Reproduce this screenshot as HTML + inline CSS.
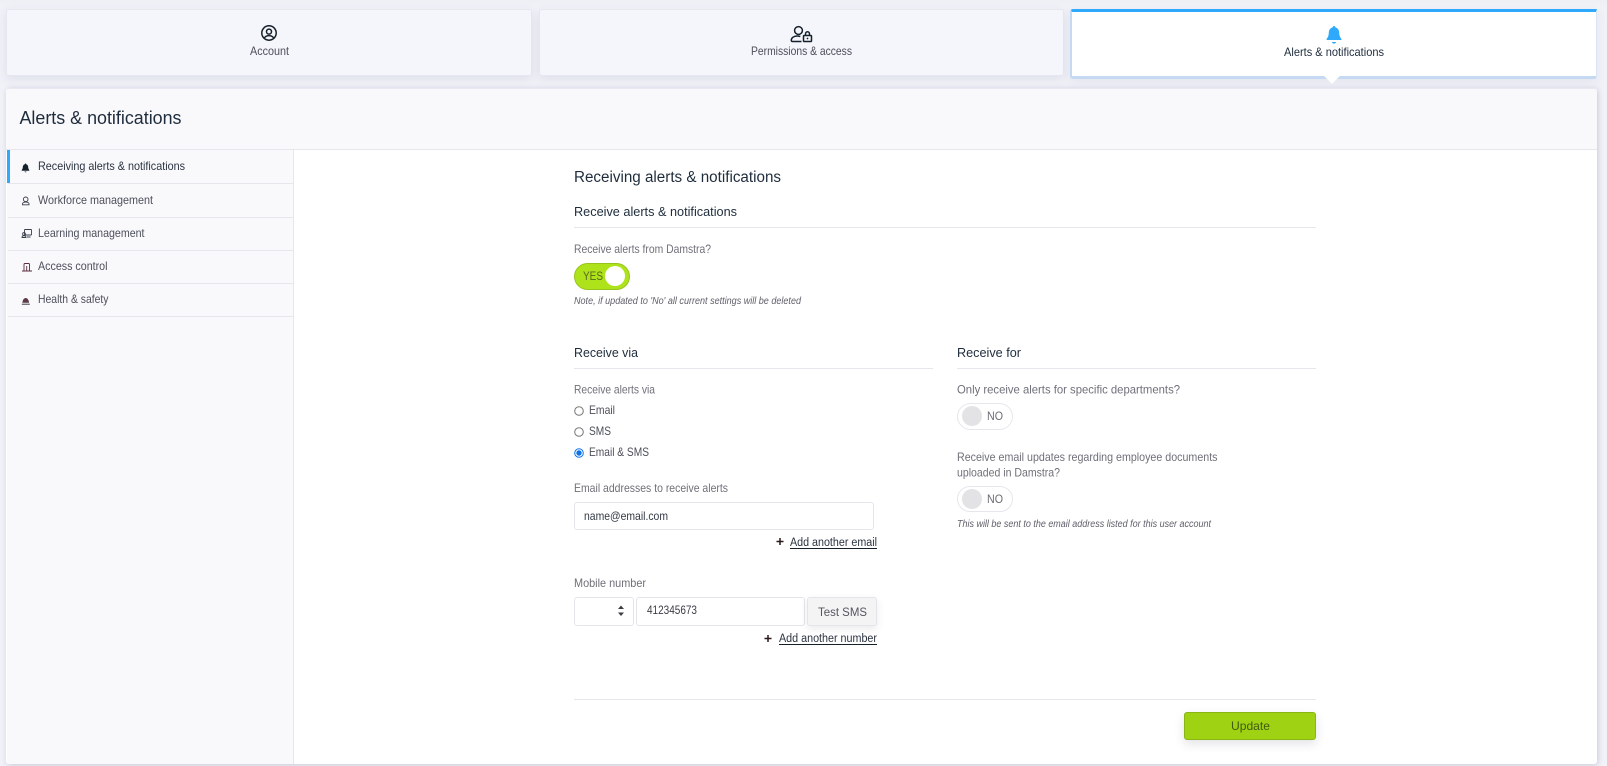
<!DOCTYPE html>
<html><head><meta charset="utf-8"><title>Alerts &amp; notifications</title>
<style>
html,body{margin:0;padding:0;width:1607px;height:766px;overflow:hidden;background:#f1f2f8;font-family:"Liberation Sans",sans-serif}
.b{position:absolute;box-sizing:border-box}
.tab{background:#f4f6fb;border:1px solid #e6e7ef;border-radius:3px;box-shadow:0 3px 10px rgba(60,60,110,.10);top:9px;height:67px}
svg.t{position:absolute;left:0;top:0;width:1607px;height:766px}
svg.t text{font-family:"Liberation Sans",sans-serif;font-size:12px;fill:#6f7079}
svg.t .d{fill:#1f2c3c}
svg.t .m{fill:#4d4f5a}
</style></head><body>
<div class="b" style="left:0;top:0;width:1607px;height:8px;background:linear-gradient(#eeeff5,#f1f2f8)"></div>
<div class="b tab" style="left:6px;width:526px"></div>
<div class="b tab" style="left:539px;width:525px"></div>
<div class="b" style="left:1070px;top:9px;width:527px;height:70px;background:#fff;border-top:3px solid #2fa9fb;border-left:2px solid #c5d9f3;border-bottom:3px solid #c5d9f3;border-right:1px solid #d9e4f5;border-radius:3px 0 3px 3px;box-shadow:0 3px 10px rgba(60,60,110,.08)"></div>
<div class="b" style="left:1325px;top:67px;width:14px;height:14px;background:#fff;transform:rotate(45deg)"></div>

<div class="b" style="left:6px;top:88px;width:1591px;height:676px;background:#fff;border-radius:3px;box-shadow:1px 1px 6px rgba(60,60,110,.22)"></div>
<div class="b" style="left:6px;top:88px;width:1591px;height:62px;background:#f9f9fc;border-bottom:1px solid #e6e7ec;border-top:1px solid #e9eaf1;border-radius:3px 3px 0 0"></div>
<div class="b" style="left:7px;top:150px;width:287px;height:614px;background:#f9f9fc;border-right:1px solid #e6e7ec"></div>
<div class="b" style="left:7px;top:150px;width:3px;height:33px;background:#2fa9fb"></div>
<div class="b" style="left:8px;top:183px;width:285px;height:1px;background:#e6e7ec"></div>
<div class="b" style="left:8px;top:217px;width:285px;height:1px;background:#e6e7ec"></div>
<div class="b" style="left:8px;top:250px;width:285px;height:1px;background:#e6e7ec"></div>
<div class="b" style="left:8px;top:283px;width:285px;height:1px;background:#e6e7ec"></div>
<div class="b" style="left:8px;top:316px;width:285px;height:1px;background:#e6e7ec"></div>

<div class="b" style="left:574px;top:227px;width:742px;height:1px;background:#e6e7ec"></div>
<div class="b" style="left:574px;top:368px;width:359px;height:1px;background:#e6e7ec"></div>
<div class="b" style="left:957px;top:368px;width:359px;height:1px;background:#e6e7ec"></div>
<div class="b" style="left:574px;top:699px;width:742px;height:1px;background:#e6e7ec"></div>

<div class="b" style="left:574px;top:263px;width:56px;height:27px;border-radius:14px;background:#aee31c;border:1px solid #97c41c"></div>
<div class="b" style="left:605px;top:266px;width:20px;height:20px;border-radius:50%;background:#fff"></div>
<div class="b" style="left:957px;top:403px;width:56px;height:27px;border-radius:14px;background:#fff;border:1px solid #e6e7ec"></div>
<div class="b" style="left:962px;top:406px;width:20px;height:20px;border-radius:50%;background:#e3e3e5"></div>
<div class="b" style="left:957px;top:486px;width:56px;height:26px;border-radius:13px;background:#fff;border:1px solid #e6e7ec"></div>
<div class="b" style="left:962px;top:489px;width:20px;height:20px;border-radius:50%;background:#e3e3e5"></div>

<div class="b" style="left:574px;top:502px;width:300px;height:28px;border:1px solid #e4e5ea;border-radius:3px;background:#fff"></div>
<div class="b" style="left:574px;top:597px;width:60px;height:29px;border:1px solid #e4e5ea;border-radius:3px;background:#fff"></div>
<div class="b" style="left:636px;top:597px;width:169px;height:29px;border:1px solid #e4e5ea;border-radius:3px;background:#fff"></div>
<div class="b" style="left:807px;top:597px;width:70px;height:29px;border:1px solid #e4e5ea;border-radius:3px;background:#f4f4f5;box-shadow:0 3px 8px rgba(60,60,80,.10)"></div>
<div class="b" style="left:1184px;top:712px;width:132px;height:28px;border:1px solid #8ab512;border-radius:3px;background:#a0d214;box-shadow:0 4px 10px rgba(60,60,80,.14)"></div>

<svg class="t" viewBox="0 0 1607 766" xmlns="http://www.w3.org/2000/svg">
<!-- tab icons -->
<g fill="none" stroke="#15202b" stroke-width="1.5">
<circle cx="269" cy="33" r="7.2"/><circle cx="269" cy="31.6" r="2.5"/><path d="M264.2 38.4c.8-2 2.6-2.8 4.8-2.8s4 .8 4.8 2.8"/>
<circle cx="798.5" cy="30.500" r="3.900"/><path d="M801.500 41.500h-9c-.8 0-1.200-.5-1.200-1.100 0-2.700 2.500-4.400 6-4.400 1.200 0 2 .2 3 .5"/>
<rect x="803.500" y="35.500" width="8" height="6" rx=".8"/><path d="M805.500 35.500v-1.500c0-1.400.9-2.200 2-2.200s2 .8 2 2.200v1.500"/>
</g>
<circle cx="807.500" cy="38.500" r=".9" fill="#15202b"/>
<path d="M1334 26c.8 0 1.300.6 1.400 1.400 2.500.7 3.700 2.800 3.800 5.200.1 2.800.7 4.700 2.200 6.300v1.100h-14.800v-1.100c1.500-1.600 2.100-3.500 2.200-6.300.1-2.400 1.300-4.500 3.800-5.200.1-.8.600-1.400 1.400-1.400zM1331.800 42h4.400c-.2 1-1.100 1.600-2.200 1.600s-2-.6-2.200-1.600z" fill="#2fa9fb"/>
<!-- sidebar icons -->
<path d="M25.500 163.500c.4 0 .7.300.7.700 1.300.4 1.900 1.500 2 2.700 0 1.400.4 2.400 1.100 3.200v.7h-7.600v-.7c.7-.8 1.100-1.800 1.100-3.200.1-1.200.7-2.300 2-2.700 0-.4.300-.7.700-.7zM24.500 171.500h2c-.1.500-.5.800-1 .8s-.9-.3-1-.8z" fill="#15202b"/>
<g fill="none" stroke="#3a3f4a" stroke-width=".9">
<circle cx="25.700" cy="199.300" r="2.300"/><path d="M22.500 204.800h6.500v-1c0-1-1.500-1.800-3.200-1.800s-3.300.8-3.300 1.800z"/>
<rect x="24.500" y="229.500" width="7" height="5.500" rx=".5"/><circle cx="24" cy="234" r="1.400"/><path d="M22 237.500c0-1.400 1-1.800 2-1.800s2 .4 2 1.800zM27 237h3.500"/>
</g>
<g fill="none" stroke="#5a2e3a" stroke-width=".9"><path d="M22 271h10M24 271v-6.500q0-1 1-1h3.500q1 0 1 1v6.500M26.700 271v-5"/></g>
<path d="M22.300 302.700c.4-2.800 1.700-4.700 3.400-4.700s3 1.900 3.400 4.700z" fill="#5a3a44"/><path d="M21.800 304.200h8" stroke="#3a3f4a" stroke-width="1"/>
<!-- tab text -->
<text lengthAdjust="spacingAndGlyphs" x="250" y="55" textLength="39" class="m">Account</text>
<text lengthAdjust="spacingAndGlyphs" x="751" y="55" textLength="101" class="m">Permissions &amp; access</text>
<text lengthAdjust="spacingAndGlyphs" x="1284" y="56" textLength="100" class="d">Alerts &amp; notifications</text>
<text lengthAdjust="spacingAndGlyphs" x="19.500" y="124" textLength="162" class="d" style="font-size:18px">Alerts &amp; notifications</text>
<!-- sidebar text -->
<text lengthAdjust="spacingAndGlyphs" x="38" y="170" textLength="147" class="d" style="fill:#2b3340">Receiving alerts &amp; notifications</text>
<text lengthAdjust="spacingAndGlyphs" x="38" y="204" textLength="115" class="m">Workforce management</text>
<text lengthAdjust="spacingAndGlyphs" x="38" y="237" textLength="106.500" class="m">Learning management</text>
<text lengthAdjust="spacingAndGlyphs" x="38" y="270" textLength="69.500" class="m">Access control</text>
<text lengthAdjust="spacingAndGlyphs" x="38" y="303" textLength="70.500" class="m">Health &amp; safety</text>
<!-- main -->
<text lengthAdjust="spacingAndGlyphs" x="574" y="182" textLength="207" class="d" style="font-size:15.500px">Receiving alerts &amp; notifications</text>
<text lengthAdjust="spacingAndGlyphs" x="574" y="216" textLength="163" class="d" style="font-size:13px">Receive alerts &amp; notifications</text>
<text lengthAdjust="spacingAndGlyphs" x="574" y="253" textLength="137">Receive alerts from Damstra?</text>
<text lengthAdjust="spacingAndGlyphs" x="583" y="280" textLength="20" style="fill:#57681a;font-size:11.500px">YES</text>
<text lengthAdjust="spacingAndGlyphs" x="574" y="304" textLength="227" style="font-size:10px;font-style:italic;fill:#5f606a">Note, if updated to 'No' all current settings will be deleted</text>
<text lengthAdjust="spacingAndGlyphs" x="574" y="357" textLength="64" class="d" style="font-size:13px">Receive via</text>
<text lengthAdjust="spacingAndGlyphs" x="957" y="357" textLength="64" class="d" style="font-size:13px">Receive for</text>
<text lengthAdjust="spacingAndGlyphs" x="574" y="393.500" textLength="81">Receive alerts via</text>
<circle cx="579" cy="411" r="4.300" fill="#fff" stroke="#767676" stroke-width="1"/>
<circle cx="579" cy="432" r="4.300" fill="#fff" stroke="#767676" stroke-width="1"/>
<circle cx="579" cy="453" r="4.300" fill="#fff" stroke="#0f73e6" stroke-width="1"/><circle cx="579" cy="453" r="2.700" fill="#0f73e6"/>
<text lengthAdjust="spacingAndGlyphs" x="589" y="414" textLength="26" class="m">Email</text>
<text lengthAdjust="spacingAndGlyphs" x="589" y="435" textLength="22" class="m">SMS</text>
<text lengthAdjust="spacingAndGlyphs" x="589" y="456" textLength="60" class="m">Email &amp; SMS</text>
<text lengthAdjust="spacingAndGlyphs" x="574" y="492" textLength="154">Email addresses to receive alerts</text>
<text lengthAdjust="spacingAndGlyphs" x="584" y="520" textLength="84" class="d" style="fill:#333a44">name@email.com</text>
<path d="M780 538v7M776.500 541.500h7M768 635v7M764.500 638.500h7" stroke="#2a1a1a" stroke-width="1.500"/>
<text lengthAdjust="spacingAndGlyphs" x="790" y="546" textLength="87" class="d" style="fill:#2b3340;font-size:11.500px">Add another email</text>
<path d="M790 548.500h87M779 644.500h98" stroke="#15202b" stroke-width="1"/>
<text lengthAdjust="spacingAndGlyphs" x="574" y="587" textLength="72">Mobile number</text>
<path d="M618 609l3 -3.500 3 3.500zM618 612.500l3 3.500 3 -3.500z" fill="#3c3c44"/>
<text lengthAdjust="spacingAndGlyphs" x="647" y="614" textLength="50" class="d" style="fill:#3d3a44">412345673</text>
<text lengthAdjust="spacingAndGlyphs" x="818" y="616" textLength="49" style="fill:#55565f">Test SMS</text>
<text lengthAdjust="spacingAndGlyphs" x="779" y="642" textLength="98" class="d" style="fill:#2b3340;font-size:11.500px">Add another number</text>
<text lengthAdjust="spacingAndGlyphs" x="957" y="393.500" textLength="223">Only receive alerts for specific departments?</text>
<text lengthAdjust="spacingAndGlyphs" x="987" y="420" textLength="16" style="fill:#6a6c75;font-size:11.500px">NO</text>
<text lengthAdjust="spacingAndGlyphs" x="957" y="461" textLength="260.500">Receive email updates regarding employee documents</text>
<text lengthAdjust="spacingAndGlyphs" x="957" y="476.500" textLength="103">uploaded in Damstra?</text>
<text lengthAdjust="spacingAndGlyphs" x="987" y="503" textLength="16" style="fill:#6a6c75;font-size:11.500px">NO</text>
<text lengthAdjust="spacingAndGlyphs" x="957" y="527" textLength="254" style="font-size:10px;font-style:italic;fill:#5f606a">This will be sent to the email address listed for this user account</text>
<text lengthAdjust="spacingAndGlyphs" x="1231" y="730" textLength="39" style="fill:#3f5a10">Update</text>
</svg>
</body></html>
